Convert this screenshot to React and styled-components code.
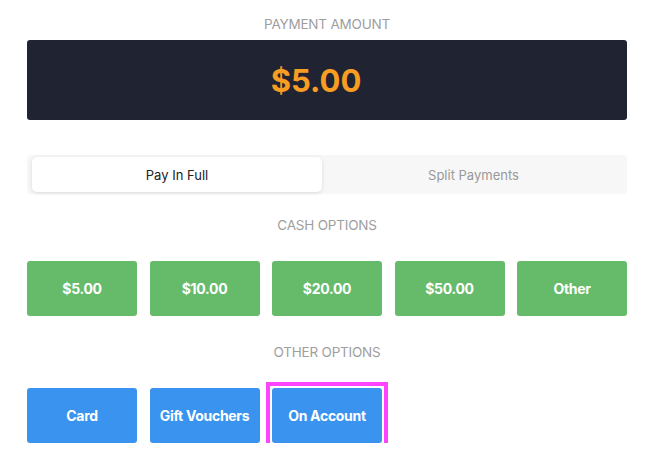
import styled, { createGlobalStyle } from "styled-components";

const GlobalStyle = createGlobalStyle`
  body {
    margin: 0;
    background: #fff;
    font-family: Inter, "Liberation Sans", sans-serif;
  }
`;

const Page = styled.div`
  width: 600px;
  padding: 17px 27px 0;
  display: flex;
  flex-direction: column;
`;

const SectionLabel = styled.div`
  text-align: center;
  font-size: 13.5px;
  line-height: 15px;
  color: #9e9e9e;
  text-transform: uppercase;
  letter-spacing: -0.2px;
  margin-bottom: ${(p) => p.gap || 16}px;
`;

const AmountBox = styled.div`
  height: 80px;
  border-radius: 3px;
  background: #1f2332;
  display: flex;
  align-items: center;
  justify-content: center;
  padding-right: 22px;
  color: #f89c22;
  font-size: 31px;
  font-weight: 700;
  margin-bottom: 35px;
`;

const Tabs = styled.div`
  display: flex;
  box-sizing: border-box;
  background: #f7f7f7;
  border-radius: 4px;
  padding: 2px 2px 2px 5px;
  height: 39px;
  margin-bottom: 24px;
`;

const Tab = styled.div`
  flex: ${(p) => (p.active ? "0 0 290px" : "1")};
  display: flex;
  align-items: center;
  justify-content: center;
  font-size: 13px;
  border-radius: 5px;
  color: ${(p) => (p.active ? "#222" : "#999")};
  background: ${(p) => (p.active ? "#fff" : "transparent")};
  box-shadow: ${(p) => (p.active ? "0 1px 4px rgba(0,0,0,0.12)" : "none")};
`;

const ButtonRow = styled.div`
  display: flex;
  gap: 12.5px;
  margin-bottom: ${(p) => p.bottom || 0}px;
`;

const OptionButton = styled.button`
  position: relative;
  width: 110px;
  height: 55px;
  border: none;
  border-radius: 3px;
  color: #fff;
  font-family: Inter, "Liberation Sans", sans-serif;
  font-size: 14px;
  font-weight: 700;
  letter-spacing: -0.3px;
  background: ${(p) => (p.kind === "cash" ? "#66bb6a" : "#3a93ef")};
  outline: none;
  padding: 0;

  &::after {
    content: "";
    display: ${(p) => (p.focused ? "block" : "none")};
    position: absolute;
    inset: -6px;
    border: 4px solid #ff44ff;
  }
`;

const cash = ["$5.00", "$10.00", "$20.00", "$50.00", "Other"];
const other = ["Card", "Gift Vouchers", "On Account"];

export default function App() {
  return (
    <>
      <GlobalStyle />
      <Page>
        <SectionLabel gap={8}>Payment Amount</SectionLabel>
        <AmountBox>$5.00</AmountBox>
        <Tabs>
          <Tab active>Pay In Full</Tab>
          <Tab>Split Payments</Tab>
        </Tabs>
        <SectionLabel gap={28}>Cash Options</SectionLabel>
        <ButtonRow bottom={29}>
          {cash.map((c) => (
            <OptionButton key={c} kind="cash">
              {c}
            </OptionButton>
          ))}
        </ButtonRow>
        <SectionLabel gap={28}>Other Options</SectionLabel>
        <ButtonRow>
          {other.map((c) => (
            <OptionButton key={c} kind="other" focused={c === "On Account"}>
              {c}
            </OptionButton>
          ))}
        </ButtonRow>
      </Page>
    </>
  );
}
